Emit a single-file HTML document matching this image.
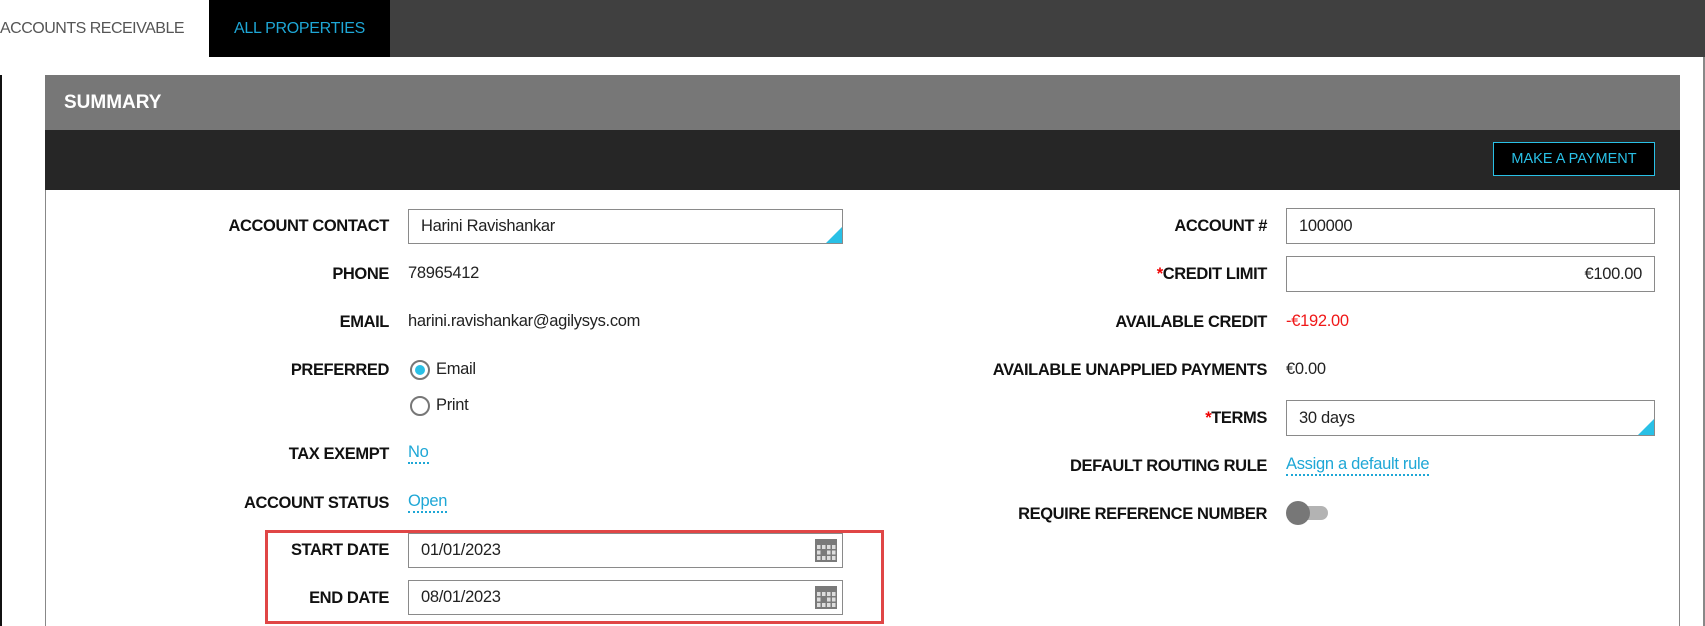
<!DOCTYPE html>
<html><head><meta charset="utf-8"><style>
*{margin:0;padding:0;box-sizing:border-box}
body{width:1705px;height:626px;overflow:hidden;background:#fff;font-family:"Liberation Sans",sans-serif;position:relative}
.a{position:absolute}
.lbl{position:absolute;right:1316px;font-weight:bold;font-size:16.5px;color:#111;letter-spacing:-0.4px;white-space:nowrap}
.rl{position:absolute;right:438px;font-weight:bold;font-size:16.5px;color:#111;letter-spacing:-0.4px;white-space:nowrap}
.val{position:absolute;font-size:16.5px;color:#222;letter-spacing:-0.3px;white-space:nowrap}
.inp{position:absolute;border:1px solid #8a8a8a;background:#fff;font-size:16.5px;color:#222;padding-left:12px;display:flex;align-items:center;letter-spacing:-0.3px}
.tri{position:absolute;right:0;bottom:0;width:0;height:0;border-left:16px solid transparent;border-bottom:16px solid #29c0e6}
.link{position:absolute;font-size:16.5px;color:#1ea7d6;border-bottom:2px dotted #1ea7d6;line-height:19px;letter-spacing:-0.3px;white-space:nowrap}
.cal{position:absolute;right:5px;top:5px}
</style></head><body>
<div class="a" style="left:0;top:0;width:1705px;height:57px;background:#404040"></div>
<div class="a" style="left:0;top:0;width:209px;height:57px;background:#fff;font-size:16px;color:#555;line-height:57px;letter-spacing:-0.5px">ACCOUNTS RECEIVABLE</div>
<div class="a" style="left:209px;top:0;width:181px;height:57px;background:#000;color:#1ea7d6;font-size:16px;line-height:57px;text-align:center;letter-spacing:-0.3px">ALL PROPERTIES</div>
<div class="a" style="left:0;top:75px;width:2px;height:551px;background:#111"></div>
<div class="a" style="left:1703px;top:57px;width:2px;height:569px;background:#888"></div>
<div class="a" style="left:45px;top:75px;width:1635px;height:551px;border-left:1px solid #888;border-right:1px solid #888"></div>
<div class="a" style="left:45px;top:75px;width:1635px;height:55px;background:#777;color:#fff;font-weight:bold;font-size:19px;line-height:55px;padding-left:19px">SUMMARY</div>
<div class="a" style="left:45px;top:130px;width:1635px;height:60px;background:#262626"></div>
<div class="a" style="left:1493px;top:142px;width:162px;height:34px;border:1px solid #29c0e6;background:#000;color:#29c0e6;font-size:14.5px;text-align:center;line-height:32px">MAKE A PAYMENT</div>

<div class="lbl" style="top:217px">ACCOUNT CONTACT</div>
<div class="inp" style="left:408px;top:209px;width:435px;height:35px">Harini Ravishankar<div class="tri"></div></div>
<div class="lbl" style="top:265px">PHONE</div><div class="val" style="left:408px;top:264px">78965412</div>
<div class="lbl" style="top:313px">EMAIL</div><div class="val" style="left:408px;top:312px">harini.ravishankar@agilysys.com</div>
<div class="lbl" style="top:361px">PREFERRED</div>
<div class="a" style="left:410px;top:360px;width:20px;height:20px;border:2px solid #777;border-radius:50%"><div style="margin:3px;width:10px;height:10px;border-radius:50%;background:#29c0e6"></div></div>
<div class="val" style="left:436px;top:360px">Email</div>
<div class="a" style="left:410px;top:396px;width:20px;height:20px;border:2px solid #777;border-radius:50%"></div>
<div class="val" style="left:436px;top:396px">Print</div>
<div class="lbl" style="top:445px">TAX EXEMPT</div><div class="link" style="left:408px;top:443px">No</div>
<div class="lbl" style="top:494px">ACCOUNT STATUS</div><div class="link" style="left:408px;top:492px">Open</div>
<div class="a" style="left:265px;top:530px;width:619px;height:94px;border:3px solid #e04646"></div>
<div class="lbl" style="top:541px">START DATE</div>
<div class="inp" style="left:408px;top:533px;width:435px;height:35px">01/01/2023<svg class="cal" width="22" height="23" viewBox="0 0 22 23"><rect width="22" height="23" fill="#7a7a7a"/><g fill="#ddd"><rect x="2" y="6" width="3.5" height="4"/><rect x="7" y="6" width="3.5" height="4"/><rect x="12" y="6" width="3.5" height="4"/><rect x="17" y="6" width="3.5" height="4"/><rect x="2" y="11.5" width="3.5" height="4"/><rect x="12" y="11.5" width="3.5" height="4"/><rect x="17" y="11.5" width="3.5" height="4"/><rect x="2" y="17" width="3.5" height="4"/><rect x="7" y="17" width="3.5" height="4"/><rect x="12" y="17" width="3.5" height="4"/><rect x="17" y="17" width="3.5" height="4"/></g></svg></div>
<div class="lbl" style="top:589px">END DATE</div>
<div class="inp" style="left:408px;top:580px;width:435px;height:35px">08/01/2023<svg class="cal" width="22" height="23" viewBox="0 0 22 23"><rect width="22" height="23" fill="#7a7a7a"/><g fill="#ddd"><rect x="2" y="6" width="3.5" height="4"/><rect x="7" y="6" width="3.5" height="4"/><rect x="12" y="6" width="3.5" height="4"/><rect x="17" y="6" width="3.5" height="4"/><rect x="2" y="11.5" width="3.5" height="4"/><rect x="12" y="11.5" width="3.5" height="4"/><rect x="17" y="11.5" width="3.5" height="4"/><rect x="2" y="17" width="3.5" height="4"/><rect x="7" y="17" width="3.5" height="4"/><rect x="12" y="17" width="3.5" height="4"/><rect x="17" y="17" width="3.5" height="4"/></g></svg></div>

<div class="rl" style="top:217px">ACCOUNT #</div>
<div class="inp" style="left:1286px;top:208px;width:369px;height:36px">100000</div>
<div class="rl" style="top:265px"><span style="color:#e00">*</span>CREDIT LIMIT</div>
<div class="inp" style="left:1286px;top:256px;width:369px;height:36px;justify-content:flex-end;padding-right:12px">€100.00</div>
<div class="rl" style="top:313px">AVAILABLE CREDIT</div><div class="val" style="left:1286px;top:312px;color:#f01818">-€192.00</div>
<div class="rl" style="top:361px">AVAILABLE UNAPPLIED PAYMENTS</div><div class="val" style="left:1286px;top:360px">€0.00</div>
<div class="rl" style="top:409px"><span style="color:#e00">*</span>TERMS</div>
<div class="inp" style="left:1286px;top:400px;width:369px;height:36px">30 days<div class="tri"></div></div>
<div class="rl" style="top:457px">DEFAULT ROUTING RULE</div><div class="link" style="left:1286px;top:455px">Assign a default rule</div>
<div class="rl" style="top:505px">REQUIRE REFERENCE NUMBER</div>
<div class="a" style="left:1290px;top:506px;width:38px;height:14px;border-radius:7px;background:#b3b3b3"></div>
<div class="a" style="left:1286px;top:501px;width:24px;height:24px;border-radius:50%;background:#777"></div>
</body></html>
